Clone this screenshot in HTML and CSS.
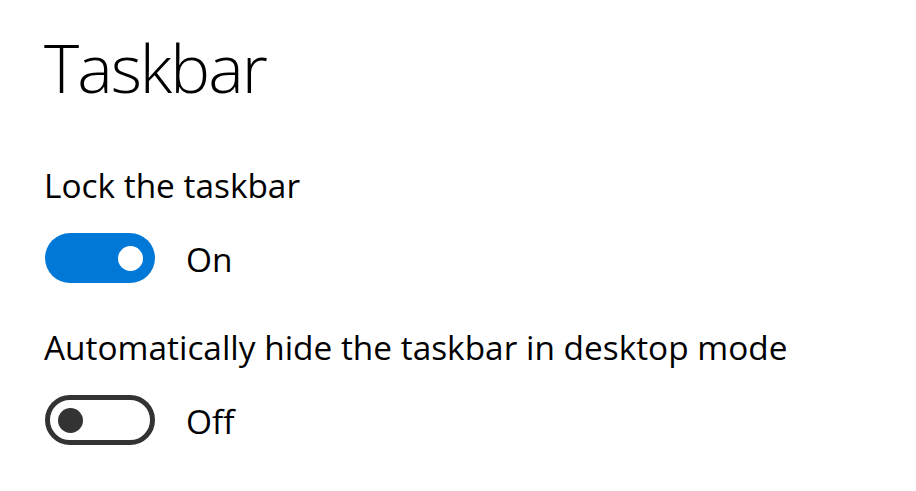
FILE: index.html
```html
<!DOCTYPE html>
<html lang="en">
<head>
<meta charset="utf-8">
<title>Taskbar</title>
<link rel="stylesheet" href="styles.css">
</head>
<body>
<main class="page">
  <h1 class="title">Taskbar</h1>
  <section class="setting">
    <div class="label">Lock the taskbar</div>
    <div class="toggle-row">
      <span class="toggle toggle-on"><span class="knob"></span></span>
      <span class="state">On</span>
    </div>
  </section>
  <section class="setting">
    <div class="label">Automatically hide the taskbar in desktop mode</div>
    <div class="toggle-row">
      <span class="toggle toggle-off"><span class="knob"></span></span>
      <span class="state">Off</span>
    </div>
  </section>
</main>
</body>
</html>
```
FILE: styles.css
```css
html, body {
  margin: 0;
  padding: 0;
  background: #ffffff;
}

body {
  font-family: "Open Sans", "Noto Sans", sans-serif;
  color: #000000;
}

.page {
  padding: 33.5px 0 0 44px;
  display: flex;
  flex-direction: column;
}

.title {
  margin: 0;
  font-size: 67px;
  font-weight: 300;
  letter-spacing: -2px;
  line-height: 1;
}

.setting {
  display: flex;
  flex-direction: column;
  gap: 30.3px;
}

.title + .setting {
  margin-top: 68.8px;
}

.setting + .setting {
  margin-top: 48.3px;
}

.label {
  font-size: 33.4px;
  line-height: 1;
}

.toggle-row {
  display: flex;
  align-items: center;
  gap: 31px;
  padding-left: 1px;
}

.toggle {
  box-sizing: border-box;
  width: 110px;
  height: 50px;
  border-radius: 25px;
  display: flex;
  align-items: center;
  padding: 0 7.5px;
}

.toggle-on {
  background: #0078d7;
  justify-content: flex-end;
  padding: 0 12.5px;
}

.toggle-off {
  border: 5px solid #333333;
  justify-content: flex-start;
}

.knob {
  width: 25px;
  height: 25px;
  border-radius: 50%;
}

.toggle-on .knob {
  background: #ffffff;
}

.toggle-off .knob {
  background: #333333;
}

.state {
  font-size: 33.4px;
  line-height: 1;
  padding-top: 3px;
}
```
